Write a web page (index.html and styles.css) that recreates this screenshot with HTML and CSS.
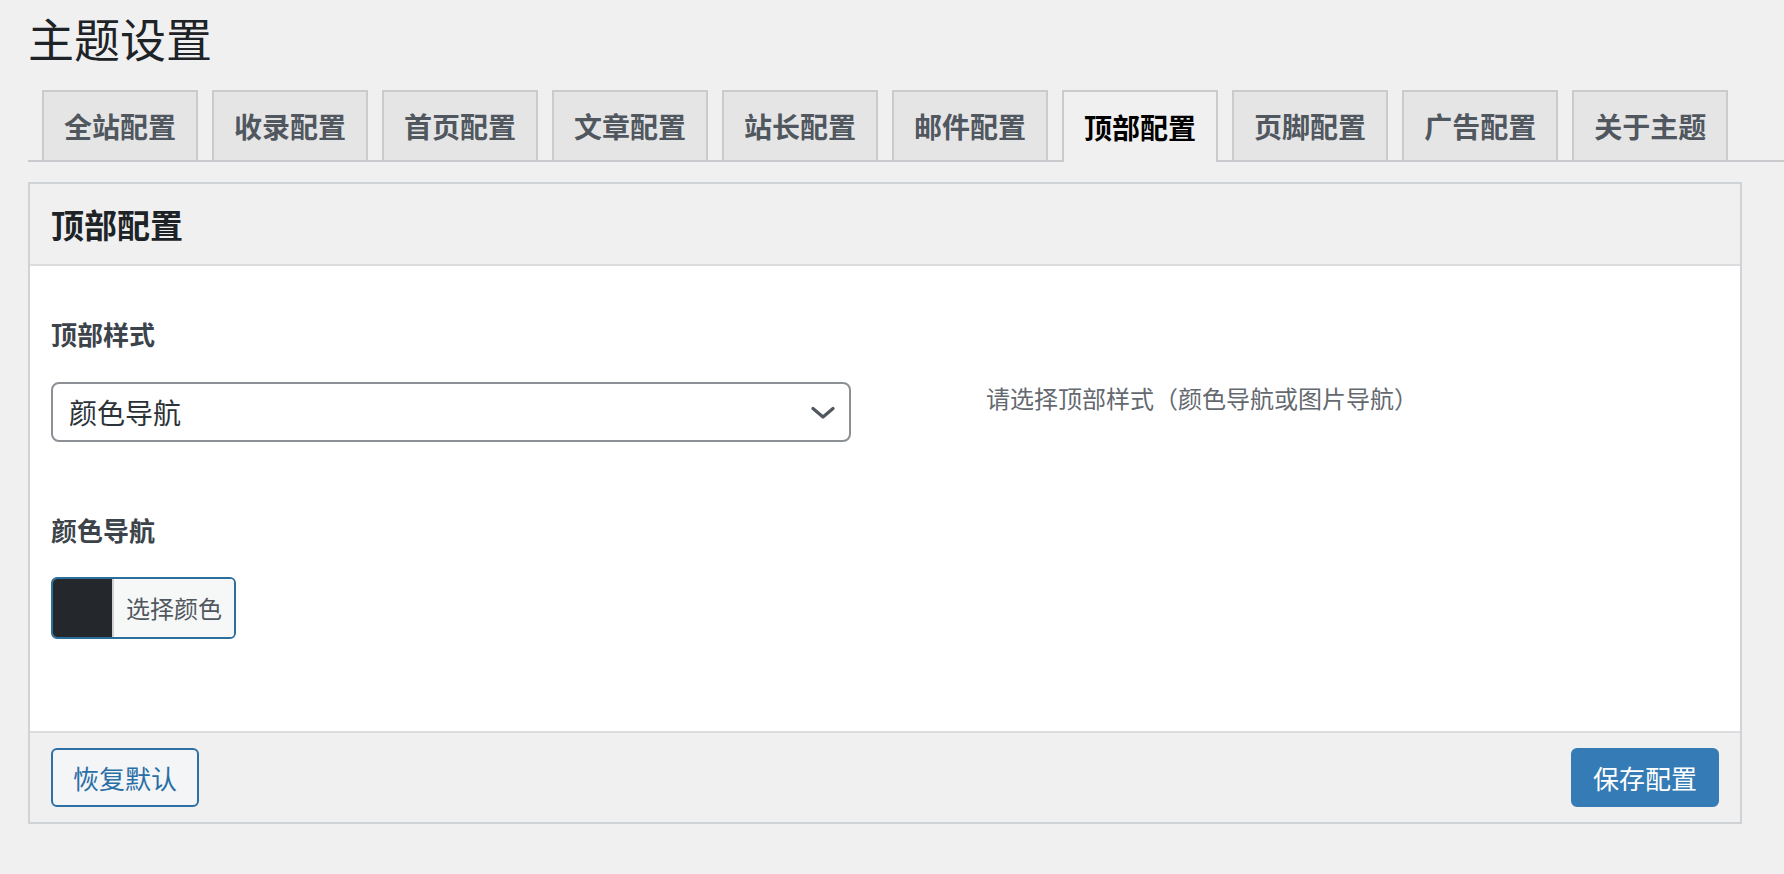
FILE: index.html
```html
<!DOCTYPE html>
<html lang="zh-CN">
<head>
<meta charset="utf-8">
<title>主题设置</title>
<link rel="stylesheet" href="styles.css">
</head>
<body>
<div class="wrap">
  <h1 class="page-title">主题设置</h1>
  <nav class="tabs">
    <a class="tab">全站配置</a>
    <a class="tab">收录配置</a>
    <a class="tab">首页配置</a>
    <a class="tab">文章配置</a>
    <a class="tab">站长配置</a>
    <a class="tab">邮件配置</a>
    <a class="tab tab-active">顶部配置</a>
    <a class="tab">页脚配置</a>
    <a class="tab">广告配置</a>
    <a class="tab">关于主题</a>
  </nav>
  <section class="panel">
    <h2 class="panel-head">顶部配置</h2>
    <div class="panel-body">
      <div class="field">
        <div class="field-label">顶部样式</div>
        <div class="field-row">
          <div class="select">
            <span>颜色导航</span>
            <svg class="chev" width="24" height="14" viewBox="0 0 24 14"><path d="M2 2.5 L12 11 L22 2.5" fill="none" stroke="#50575e" stroke-width="3.2" stroke-linecap="round" stroke-linejoin="round"/></svg>
          </div>
          <div class="field-desc">请选择顶部样式（颜色导航或图片导航）</div>
        </div>
      </div>
      <div class="field field-second">
        <div class="field-label">颜色导航</div>
        <div class="color-btn">
          <span class="swatch"></span>
          <span class="color-text">选择颜色</span>
        </div>
      </div>
    </div>
    <div class="panel-foot">
      <button class="btn btn-secondary">恢复默认</button>
      <button class="btn btn-primary">保存配置</button>
    </div>
  </section>
</div>
</body>
</html>
```

FILE: styles.css
```css
* { box-sizing: border-box; }
html, body { margin: 0; padding: 0; }
body {
  background: #f0f0f1;
  font-family: "Noto Sans CJK SC", "Noto Sans", sans-serif;
  color: #1d2327;
  width: 1784px;
  height: 874px;
  overflow: hidden;
}
.wrap { padding-left: 28px; }
.page-title {
  margin: 0;
  padding-top: 7px;
  font-size: 46px;
  line-height: 60px;
  font-weight: 400;
  color: #1d2327;
}
.tabs {
  display: flex;
  gap: 14px;
  padding-left: 14px;
  margin-top: 23px;
  border-bottom: 2px solid #c9cacd;
}
.tab {
  display: flex;
  align-items: center;
  justify-content: center;
  height: 70px;
  padding: 0 20px;
  border: 2px solid #cbcbcd;
  border-bottom: none;
  background: #e5e5e6;
  color: #50575e;
  font-size: 28px;
  font-weight: 700;
  white-space: nowrap;
}
.tab-active {
  background: #f0f0f1;
  color: #000;
  height: 72px;
  margin-bottom: -2px;
}
.panel {
  margin: 20px 42px 0 0;
  border: 2px solid #d0d3d6;
}
.panel-head {
  margin: 0;
  padding: 20px 21px;
  font-size: 33px;
  line-height: 40px;
  font-weight: 700;
  color: #1d2327;
  border-bottom: 2px solid #dcdcde;
}
.panel-body {
  background: #fff;
  padding: 48px 21px 89px;
}
.field-label {
  font-size: 26px;
  line-height: 40px;
  font-weight: 700;
  color: #3c434a;
}
.field-row {
  margin-top: 28px;
  display: grid;
  grid-template-columns: 800px 1fr;
  column-gap: 135px;
  align-items: start;
}
.select {
  height: 60px;
  border: 2px solid #8c8f94;
  border-radius: 8px;
  display: flex;
  align-items: center;
  justify-content: space-between;
  padding: 0 14px 0 16px;
  font-size: 28px;
  color: #2c3338;
}
.chev { display: block; margin-top: 2px; }
.field-desc {
  font-size: 24px;
  line-height: 32px;
  color: #646970;
}
.field-second { margin-top: 68px; }
.color-btn {
  margin-top: 27px;
  display: inline-flex;
  height: 62px;
  border: 2px solid #2c6e9c;
  border-radius: 6px;
  overflow: hidden;
}
.swatch {
  width: 59px;
  background: #24272c;
}
.color-text {
  background: #f6f7f7;
  border-left: 2px solid #d0d0d0;
  padding: 0 12px;
  font-size: 24px;
  line-height: 58px;
  color: #50575e;
}
.panel-foot {
  border-top: 2px solid #dcdcde;
  padding: 15px 21px;
  display: flex;
  justify-content: space-between;
  align-items: center;
}
.btn {
  height: 59px;
  padding: 0 20px;
  border-radius: 6px;
  font-family: inherit;
  font-size: 26px;
  line-height: 1;
  border: 2px solid #2e6fa5;
}
.btn-secondary {
  background: #f3f5f6;
  color: #2a6ea6;
}
.btn-primary {
  background: #357bb5;
  border-color: #357bb5;
  color: #fff;
}
```
